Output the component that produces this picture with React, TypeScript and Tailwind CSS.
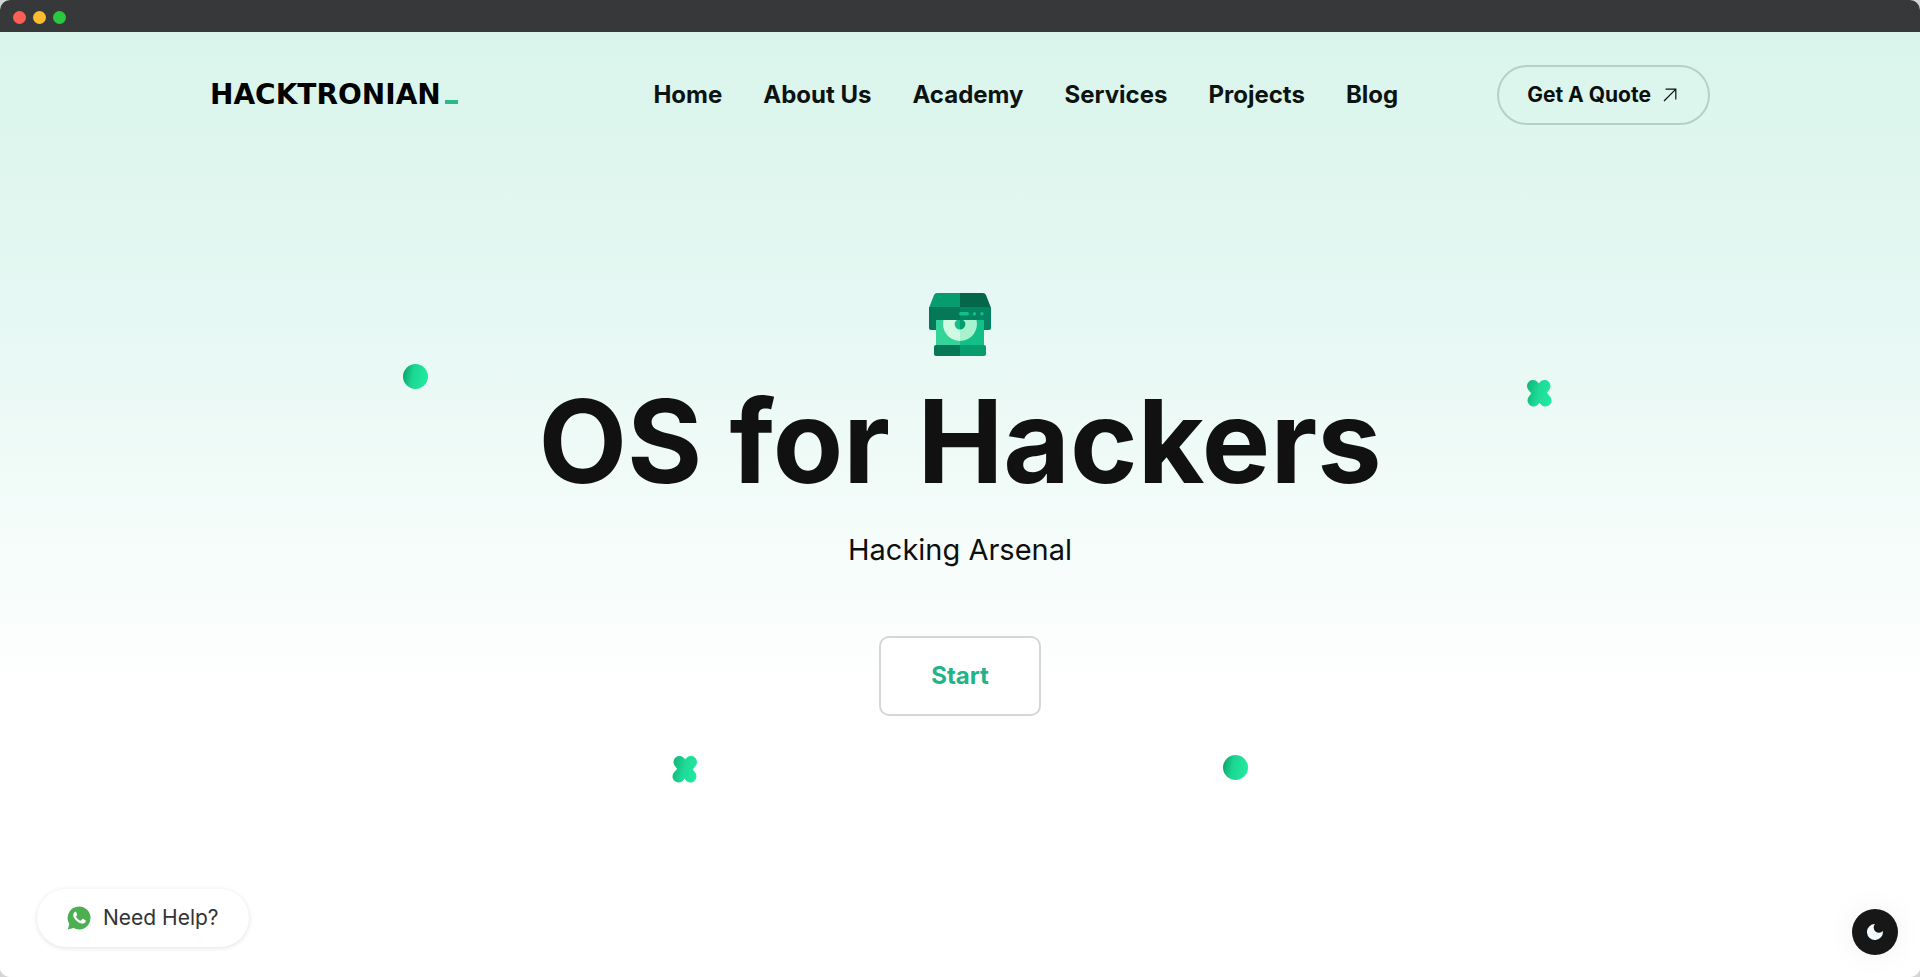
import { useState } from 'react';

const LINKS = ['Home', 'About Us', 'Academy', 'Services', 'Projects', 'Blog'];

function TitleBar() {
  return (
    <div className="flex h-8 items-center gap-[7px] bg-[#37383a] px-[13px] pt-0.5">
      <span className="h-[13px] w-[13px] rounded-full bg-[#fb5f57]" />
      <span className="h-[13px] w-[13px] rounded-full bg-[#fdbc2e]" />
      <span className="h-[13px] w-[13px] rounded-full bg-[#28c840]" />
    </div>
  );
}

function Logo() {
  return (
    <a href="#home" className="flex items-baseline gap-1 font-['DejaVu_Sans',sans-serif] text-[28px] leading-8 font-bold text-black">
      HACKTRONIAN
      <span className="h-1 w-[13px] bg-[#2bb88c]" />
    </a>
  );
}

function Header() {
  return (
    <header className="mx-auto flex w-full max-w-[1500px] items-center pt-[33px]">
      <Logo />
      <nav className="mr-[99px] ml-auto flex gap-[41px] text-2xl font-bold text-[#0c1311]">
        {LINKS.map((label) => (
          <a key={label} href={`#${label}`} className="hover:text-[#1fb88a]">
            {label}
          </a>
        ))}
      </nav>
      <a
        href="#quote"
        className="flex h-[60px] items-center gap-3 rounded-full border-2 border-[#b6d0c7] pr-[31px] pl-7 text-[21px] font-bold text-[#0a0f0d]"
      >
        Get A Quote
        <svg viewBox="0 0 14 14" className="h-3.5 w-3.5" fill="none" stroke="currentColor" strokeWidth="1.2" aria-hidden="true">
          <path d="M1 13 12.6 1.4M2.6 1.2h10.2v10.2" />
        </svg>
      </a>
    </header>
  );
}

function DriveIcon() {
  return (
    <svg viewBox="0 0 62 63" className="h-[63px] w-[62px]" aria-hidden="true">
      {/* lid */}
      <path d="M0 15 5 2q1-2 3-2h23v15z" fill="#079c6d" />
      <path d="M31 0h23q2 0 3 2l5 13H31z" fill="#05674a" />
      {/* body */}
      <path d="M0 14h31v23H2q-2 0-2-2z" fill="#047857" />
      <path d="M31 14h31v21q0 2-2 2H31z" fill="#048562" />
      <path d="M7 27h24v26H7z" fill="#34d399" />
      <path d="M31 27h24v26H31z" fill="#12bf87" />
      {/* disc */}
      <path d="M14.500 27H31v21A17 17 0 0 1 14.500 27z" fill="#d1fae5" />
      <path d="M31 27h16.500A17 17 0 0 1 31 48z" fill="#a7f3d0" />
      <path d="M28 27h3v9.500A5.200 5.200 0 0 1 28 27z" fill="#12bf87" />
      <path d="M31 27h3a5.200 5.200 0 0 1-3 9.500z" fill="#079c6d" />
      {/* tray */}
      <path d="M5 54q0-2 2-2h24v11H7q-2 0-2-2z" fill="#047857" />
      <path d="M31 52h24q2 0 2 2v7q0 2-2 2H31z" fill="#079c6d" />
      <rect x="30" y="19" width="10" height="3.400" rx="1.700" fill="#12bf87" />
      <circle cx="45.500" cy="20.700" r="1.700" fill="#12bf87" />
      <circle cx="53" cy="20.700" r="1.700" fill="#12bf87" />
    </svg>
  );
}

function Ball({ className }: { className: string }) {
  return (
    <span
      className={`absolute h-[25px] w-[25px] rounded-full bg-linear-[100deg] from-[#0c9a67] via-[#1bd792] via-40% to-[#22eda3] ${className}`}
    />
  );
}

function Cross({ className, flip }: { className: string; flip?: boolean }) {
  const id = flip ? 'cross-b' : 'cross-a';
  return (
    <svg viewBox="0 0 26 28" className={`absolute h-7 w-[26px] ${flip ? '-scale-x-100' : ''} ${className}`} aria-hidden="true">
      <defs>
        <linearGradient id={id} gradientUnits="userSpaceOnUse" x1={flip ? 26 : 0} y1="10" x2={flip ? 0 : 26} y2="16">
          <stop offset="0" stopColor="#0fb67a" />
          <stop offset="0.500" stopColor="#1edb98" />
          <stop offset="1" stopColor="#20eaa2" />
        </linearGradient>
      </defs>
      <g stroke={`url(#${id})`} strokeWidth="12" strokeLinecap="round">
        <path d="M7 7 19.500 21.500" />
        <path d="M18.500 7 7.500 21.500" />
      </g>
    </svg>
  );
}

function Hero() {
  return (
    <section className="flex flex-col items-center pt-[168px] text-center">
      <DriveIcon />
      <h1 className="mt-3.5 text-[115px] leading-[144px] font-bold text-[#111111]">OS for Hackers</h1>
      <p className="mt-4 text-[29px] leading-10 text-[#0d0f0e]">Hacking Arsenal</p>
      <button
        type="button"
        className="mt-[66px] h-20 rounded-[10px] border-2 border-[#d5d7d6] bg-white px-[50px] text-2xl font-bold text-[#23b389] hover:border-[#23b389]"
      >
        Start
      </button>
    </section>
  );
}

function ThemeToggle() {
  const [dark, setDark] = useState(false);
  return (
    <button
      type="button"
      aria-label="Toggle theme"
      aria-pressed={dark}
      onClick={() => setDark(!dark)}
      className="absolute right-[22px] bottom-[22px] flex h-[46px] w-[46px] items-center justify-center rounded-full bg-[#171717] shadow-[0_0_30px_rgba(0,0,0,0.06)]"
    >
      <svg viewBox="0 0 16 16" className="h-4 w-4" fill="#f4fbff" aria-hidden="true">
        <path d="M8 0A4.600 4.600 0 0 0 15.900 7 8 8 0 1 1 8 0z" />
      </svg>
    </button>
  );
}

export default function App() {
  return (
    <div className="min-h-screen bg-[#d4d4d4] font-['Inter',sans-serif]">
      <div className="relative flex min-h-screen flex-col overflow-hidden rounded-[10px] bg-white">
        <TitleBar />
        <main className="flex-1 bg-linear-to-b from-[#d9f5eb] via-[#e6f8f3] via-30% to-white to-70%">
          <Header />
          <Hero />
        </main>

        <Ball className="top-[364px] left-[21%]" />
        <Cross className="top-[379px] left-[79.5%]" />
        <Cross className="top-[755px] left-[35%]" flip />
        <Ball className="top-[755px] left-[63.7%]" />

        <a
          href="#help"
          className="absolute bottom-[30px] left-[37px] flex h-[58px] items-center gap-3 rounded-full bg-white px-[30px] text-[21px] text-[#333333] shadow-[0_1px_5px_rgba(0,0,0,0.12)]"
        >
          <svg viewBox="0 0 24 24" className="h-6 w-6" aria-hidden="true">
            <path d="M12 .5A11.500 11.500 0 0 1 23.500 12 11.500 11.500 0 0 1 6.500 22.100L.8 23.600 2.300 18A11.500 11.500 0 0 1 12 .5z" fill="#4caf50" />
            <path
              d="M8.100 5.700c.5-.2.9 0 1.100.5l.9 2.100c.2.500 0 .8-.9 1.900-.2.200-.2.400 0 .7 1 1.700 2.300 2.900 4.200 3.700.4.200.6.100.8-.1l1.100-1.400c.3-.3.500-.3.800-.2l2.200 1.100c.4.200.5.400.4.900-.2 1.800-1.800 2.900-3.500 2.700-4.400-.7-8-4.400-8.900-7.700-.4-1.700.5-3.700 1.800-4.200z"
              fill="#fff"
            />
          </svg>
          Need Help?
        </a>
        <ThemeToggle />
      </div>
    </div>
  );
}
